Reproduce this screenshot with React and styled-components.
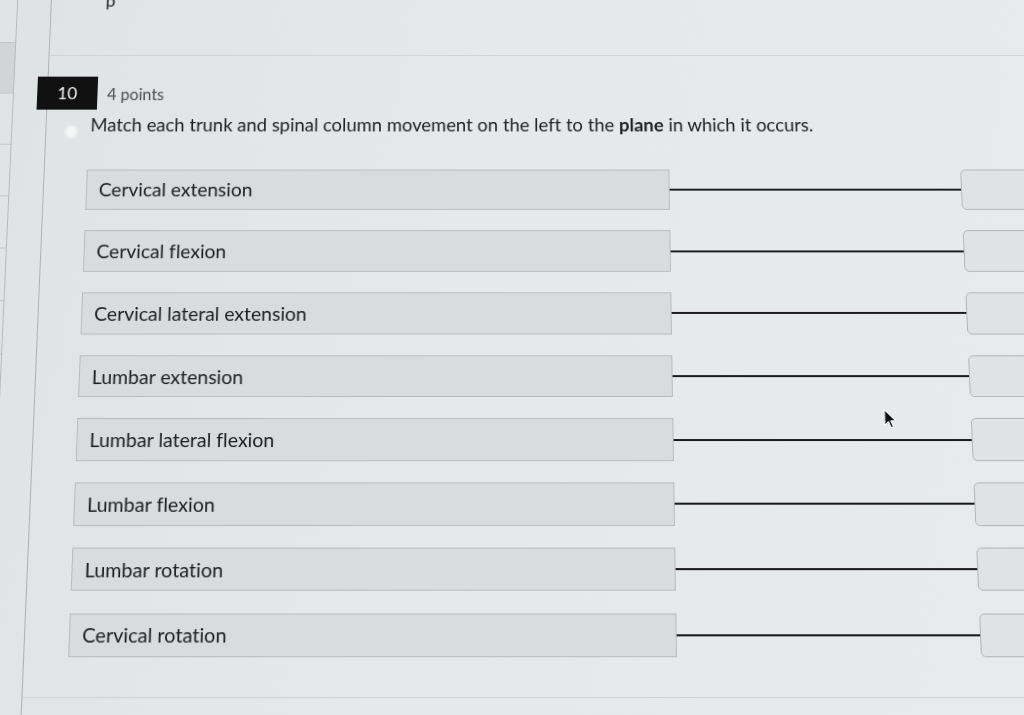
import React from 'react';
import styled, { createGlobalStyle } from 'styled-components';

const GlobalStyle = createGlobalStyle`
  html, body {
    margin: 0;
    padding: 0;
    background: #e3e6e7;
    overflow: hidden;
  }
  body {
    font-family: Lato, "Liberation Sans", sans-serif;
    font-variant-ligatures: no-common-ligatures;
    color: #1e1e1e;
  }
`;

// the photo was taken at an angle, so the whole page is tilted back a little
const Viewport = styled.div`
  width: 1024px;
  height: 715px;
  overflow: hidden;
`;

const Scene = styled.div`
  position: relative;
  width: 1160px;
  height: 800px;
  margin: -30px 0 0 -70px;
  display: flex;
  background: linear-gradient(100deg, #dfe2e3 0%, #e6e9ea 45%, #e8ebec 100%);
  transform-origin: 570px 430px;
  transform: perspective(800px) rotateX(4.15deg);
`;

const Sidebar = styled.div`
  flex: 0 0 70px;
  padding-top: 6px;
  box-sizing: border-box;
  border-right: 1px solid #b7babb;
  overflow: hidden;
`;

const NavItem = styled.div`
  height: 54px;
  box-sizing: border-box;
  border-bottom: 1px solid #c3c6c7;
  background: ${(p) => (p.$active ? '#d2d5d6' : '#e1e4e5')};
`;

const Gutter = styled.div`
  flex: 0 0 34px;
`;

const Panel = styled.div`
  flex: 1;
  border-left: 1px solid #aeb1b2;
  display: flex;
  flex-direction: column;
`;

const PrevBlock = styled.div`
  height: 74px;
  box-sizing: border-box;
  border-bottom: 1px solid #d0d3d4;
  padding: 4px 0 0 56px;
  font-size: 18px;
  line-height: 20px;
`;

const Question = styled.div`
  position: relative;
  padding-top: 22px;
`;

const Glare = styled.div`
  position: absolute;
  left: 17px;
  top: 72px;
  width: 17px;
  height: 17px;
  border-radius: 50%;
  background: radial-gradient(circle, #f6f7f7 30%, rgba(240, 242, 243, 0) 72%);
`;

const Header = styled.div`
  display: flex;
  align-items: center;
  gap: 10px;
  margin-left: -11px;
`;

const Badge = styled.div`
  width: 62px;
  height: 35px;
  background: #111;
  color: #f4f4f4;
  font-size: 17.5px;
  display: flex;
  align-items: center;
  justify-content: center;
`;

const Points = styled.div`
  font-size: 16.5px;
  color: #4d4d4d;
  padding-top: 2px;
`;

const Prompt = styled.p`
  margin: 4px 0 0 45px;
  font-size: 18.9px;
  line-height: 24px;
  color: #1f1f1f;

  b {
    font-weight: 700;
  }
`;

const Rows = styled.div`
  margin: 34.7px 0 0 43px;
  display: flex;
  flex-direction: column;
  gap: 21.2px;
`;

const MatchRow = styled.div`
  display: flex;
  align-items: center;
  height: 42.5px;
`;

const Term = styled.div`
  flex: 0 0 595px;
  height: 42.5px;
  box-sizing: border-box;
  padding: 0 0 0 12px;
  display: flex;
  align-items: center;
  background: #d9dcdd;
  border: 1px solid #b9bcbd;
  font-size: 19.5px;
  color: #1c1c1c;
`;

const Connector = styled.div`
  flex: 0 0 297px;
  height: 2px;
  background: #1a1a1a;
`;

const AnswerSlot = styled.div`
  flex: 0 0 90px;
  height: 42.5px;
  box-sizing: border-box;
  border: 1px solid #b3b6b7;
  border-radius: 5px;
  background: #e0e3e4;
`;

const Footer = styled.div`
  margin-top: 38px;
  border-top: 1px solid #d0d3d4;
`;

const Cursor = styled.svg`
  position: absolute;
  left: 953px;
  top: 439px;
`;

const terms = [
  'Cervical extension',
  'Cervical flexion',
  'Cervical lateral extension',
  'Lumbar extension',
  'Lumbar lateral flexion',
  'Lumbar flexion',
  'Lumbar rotation',
  'Cervical rotation',
];

export default function App() {
  return (
    <Viewport>
      <GlobalStyle />
      <Scene>
        <Sidebar>
          {Array.from({ length: 14 }, (_, i) => (
            <NavItem key={i} $active={i === 1} />
          ))}
        </Sidebar>
        <Gutter />
        <Panel>
          <PrevBlock>p</PrevBlock>
          <Question>
            <Glare />
            <Header>
              <Badge>10</Badge>
              <Points>4 points</Points>
            </Header>
            <Prompt>
              Match each trunk and spinal column movement on the left to the <b>plane</b> in which it occurs.
            </Prompt>
            <Rows>
              {terms.map((t) => (
                <MatchRow key={t}>
                  <Term>{t}</Term>
                  <Connector />
                  <AnswerSlot />
                </MatchRow>
              ))}
            </Rows>
            <Footer />
          </Question>
        </Panel>
        <Cursor width="13" height="20" viewBox="0 0 13 20">
          <path d="M1 1 L1 16 L4.6 12.4 L7.2 18.6 L9.4 17.6 L6.9 11.8 L11.8 11.8 Z" fill="#111" stroke="#fff" strokeWidth="1" />
        </Cursor>
      </Scene>
    </Viewport>
  );
}
